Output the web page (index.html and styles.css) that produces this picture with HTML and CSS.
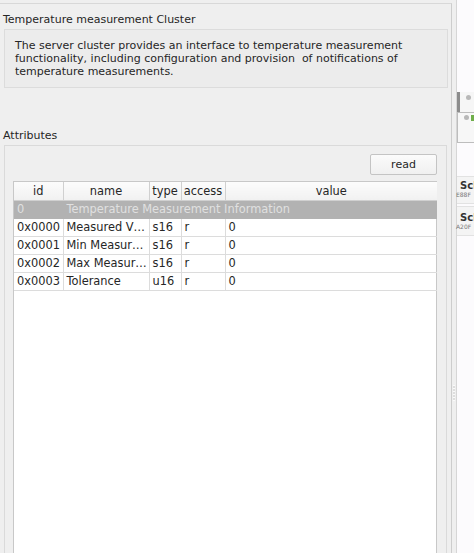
FILE: index.html
```html
<!DOCTYPE html>
<html>
<head>
<meta charset="utf-8">
<link rel="stylesheet" href="styles.css">
</head>
<body>
<div class="window">
  <div class="main">
    <div class="title">Temperature measurement Cluster</div>
    <div class="desc">The server cluster provides an interface to temperature measurement functionality, including configuration and provision&nbsp; of notifications of temperature measurements.</div>
    <div class="section-label">Attributes</div>
    <div class="group">
      <div class="toolbar"><button class="btn">read</button></div>
      <div class="table-wrap">
        <table class="attrs">
          <colgroup>
            <col class="c-id"><col class="c-name"><col class="c-type"><col class="c-access"><col class="c-value">
          </colgroup>
          <thead>
            <tr><th>id</th><th>name</th><th>type</th><th>access</th><th>value</th></tr>
          </thead>
          <tbody>
            <tr class="group-row"><td>0</td><td colspan="4">Temperature Measurement Information</td></tr>
            <tr><td>0x0000</td><td>Measured V…</td><td>s16</td><td>r</td><td>0</td></tr>
            <tr><td>0x0001</td><td>Min Measur…</td><td>s16</td><td>r</td><td>0</td></tr>
            <tr><td>0x0002</td><td>Max Measur…</td><td>s16</td><td>r</td><td>0</td></tr>
            <tr><td>0x0003</td><td>Tolerance</td><td>u16</td><td>r</td><td>0</td></tr>
          </tbody>
        </table>
      </div>
    </div>
  </div>
  <div class="splitter"><div class="grip"></div></div>
  <div class="side">
    <div class="node node-a"><span class="dot"></span></div>
    <div class="node node-b"><span class="dot"></span><span class="led"></span></div>
    <div class="scheme scheme-1"><div class="s-name">Sch</div><div class="s-id">E88F</div></div>
    <div class="scheme scheme-2"><div class="s-name">Sch</div><div class="s-id">A20F</div></div>
  </div>
</div>
</body>
</html>
```
FILE: styles.css
```css
* { box-sizing: border-box; }
html, body {
  margin: 0;
  padding: 0;
  width: 474px;
  height: 553px;
  overflow: hidden;
  background: #efefef;
  font-family: "DejaVu Sans", sans-serif;
  font-size: 11px;
  color: #262626;
}
.window {
  display: flex;
  height: 553px;
}
.main {
  width: 452px;
  flex: none;
  margin-top: 3px;
  border-top: 1px solid #d8d8d8;
  border-right: 1px solid #cdcdcd;
  padding: 0 3px 0 3px;
  display: flex;
  flex-direction: column;
}
.title {
  height: 25px;
  line-height: 14px;
  padding-top: 9px;
  padding-left: 0;
}
.desc {
  margin-left: 1px;
  width: 444px;
  height: 59px;
  border: 1px solid #dcdcdc;
  background: #ececec;
  padding: 9px 10px 0 10px;
  line-height: 13px;
}
.section-label {
  margin-top: 41px;
  height: 16px;
  line-height: 14px;
}
.group {
  margin-left: 1px;
  width: 443px;
  flex: 1;
  border: 1px solid #dadada;
  border-bottom: none;
  padding: 8px 9px 0 8px;
  display: flex;
  flex-direction: column;
}
.toolbar {
  display: flex;
  justify-content: flex-end;
  height: 21px;
  margin-bottom: 6px;
}
.btn {
  width: 67px;
  height: 21px;
  font-family: "DejaVu Sans", sans-serif;
  font-size: 11px;
  color: #262626;
  background: linear-gradient(#fbfbfb, #f0f0f0);
  border: 1px solid #c4c4c4;
  border-radius: 2px;
  padding: 0;
}
.table-wrap {
  flex: 1;
  background: #fff;
  border: 1px solid #c8c8c8;
  border-bottom: none;
}
.attrs {
  border-collapse: collapse;
  table-layout: fixed;
  width: 423px;
  font-size: 11.4px;
}
.c-id { width: 49px; }
.c-name { width: 86px; }
.c-type { width: 32px; }
.c-access { width: 44px; }
.c-value { width: 212px; }
.attrs th {
  height: 18px;
  font-weight: normal;
  text-align: center;
  background: linear-gradient(#fcfcfc, #f1f1f1);
  border-right: 1px solid #d0d0d0;
  border-bottom: 1px solid #d0d0d0;
  padding: 0;
  line-height: 16px;
}
.attrs th:last-child { border-right: none; }
.attrs td {
  height: 18px;
  padding: 0 3px;
  border-right: 1px solid #dcdcdc;
  border-bottom: 1px solid #dcdcdc;
  white-space: nowrap;
  overflow: hidden;
  line-height: 16px;
}
.attrs td:last-child { border-right: none; }
.group-row td {
  background: #b2b2b2;
  color: #e0e0e0;
  border-color: #b2b2b2;
  overflow: visible;
}
.splitter {
  width: 5px;
  flex: none;
  position: relative;
  background: #efefef;
  border-right: 1px solid #d6d6d6;
}
.grip {
  position: absolute;
  left: 1px;
  top: 385px;
  width: 2px;
  height: 16px;
  background: repeating-linear-gradient(#fafafa 0 1px, #dedede 1px 3px);
}
.side {
  flex: 1;
  background: #fcfbfd;
  position: relative;
}
.node {
  position: absolute;
  left: 0;
  right: 0;
}
.node-a {
  top: 92px;
  height: 22px;
  background: #f6f6f6;
  border-left: 3px solid #8c8c8c;
}
.node-b {
  top: 112px;
  height: 31px;
  background: #f7f7f7;
  border: 1px solid #bdbdbd;
  border-right: none;
}
.dot {
  position: absolute;
  width: 5px;
  height: 5px;
  border-radius: 50%;
  background: #b8b8b8;
}
.node-a .dot { left: 6px; top: 3px; }
.node-b .dot { left: 6px; top: 2px; }
.led {
  position: absolute;
  left: 13px;
  top: 2px;
  width: 4px;
  height: 6px;
  background: #6fae4a;
}
.scheme {
  position: absolute;
  left: 0;
  right: 0;
  background: #f4f4f4;
  border-top: 1px solid #e2e2e2;
  border-bottom: 1px solid #e2e2e2;
  padding-left: 3px;
}
.scheme-1 { top: 176px; height: 28px; padding-top: 3px; }
.scheme-2 { top: 206px; height: 30px; padding-top: 5px; }
.s-name {
  font-weight: bold;
  font-size: 10px;
  line-height: 11px;
  color: #333;
}
.s-id {
  font-size: 6px;
  line-height: 8px;
  color: #777;
  margin-left: -4px;
}
```
